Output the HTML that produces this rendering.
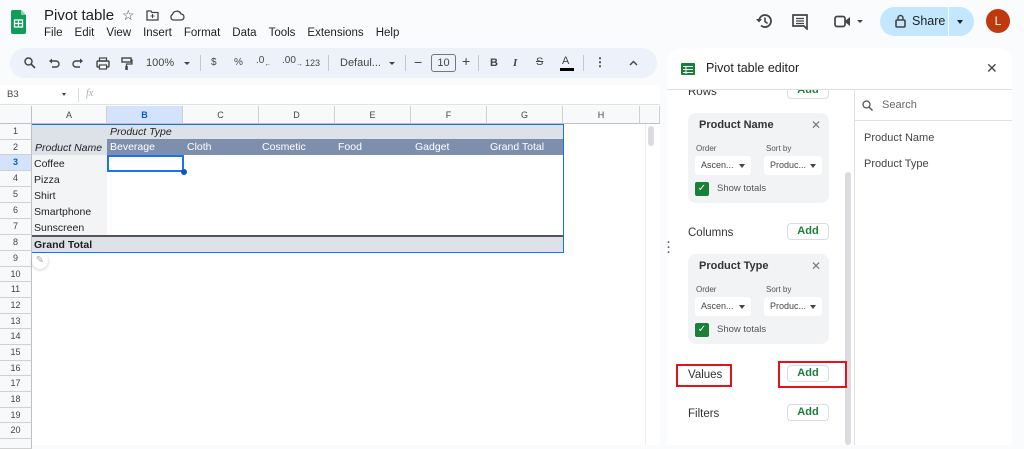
<!DOCTYPE html>
<html><head><meta charset="utf-8"><style>
*{box-sizing:border-box;margin:0;padding:0}
body{width:1024px;height:445px;overflow:hidden;background:#f9fbfd;font-family:"Liberation Sans",Arial,sans-serif;position:relative;color:#1f1f1f}
.a{position:absolute}
.menu span{margin-right:12px}
.grid{background:#fff}
.rh{position:absolute;left:0;width:32px;font-size:9px;color:#444;text-align:center;border-bottom:1px solid #d0d0d0;background:#f8f9fa;border-right:1px solid #c0c0c0}
.ch{position:absolute;top:106px;height:18px;font-size:9px;color:#444;text-align:center;line-height:18px;border-right:1px solid #d0d0d0;background:#f8f9fa;border-bottom:1px solid #c0c0c0}
.cell{position:absolute;font-size:10.5px;line-height:16px}
.btn{position:absolute;width:42px;height:17px;border:1px solid #dadce0;border-radius:4px;background:#fff;color:#188038;font-size:11px;font-weight:bold;text-align:center;line-height:15px}
.card{position:absolute;left:688px;width:141px;height:90px;background:#f1f3f4;border-radius:8px}
.sel{position:absolute;height:19px;background:#fff;border-radius:3px;font-size:9px;color:#444;line-height:19px;padding-left:6px}
.sel:after{content:"";position:absolute;right:6px;top:8px;border:3px solid transparent;border-top:4px solid #444}
.lbl{position:absolute;font-size:8px;color:#555}
.chk{position:absolute;width:14px;height:14px;background:#188038;border-radius:2px;color:#fff;font-size:10px;text-align:center;line-height:14px}
</style></head><body>
<svg class="a" style="left:11px;top:10px" width="15" height="24" viewBox="0 0 15 24"><path d="M0 2Q0 0 2 0H10L15 5V22Q15 24 13 24H2Q0 24 0 22Z" fill="#0f9d58"/><path d="M10 0V5H15Z" fill="#87ceac"/><rect x="3.5" y="10" width="8" height="7" fill="none" stroke="#fff" stroke-width="1.3"/><path d="M3.5 13.5H11.5M7.5 10V17" stroke="#fff" stroke-width="1.2"/></svg>
<div class="a" style="left:44px;top:7px;font-size:15px;color:#1f1f1f">Pivot table</div>
<div class="a" style="left:122px;top:7px;font-size:14px;color:#444">☆</div>
<svg class="a" style="left:146px;top:10px" width="13" height="11"><path d="M1 1H5L6 2.5H12V10H1Z" fill="none" stroke="#444" stroke-width="1.3"/><path d="M6.5 4V8M4.5 6H8.5" stroke="#444"/></svg>
<svg class="a" style="left:169px;top:9px" width="16" height="12"><path d="M4 11H12A3 3 0 0 0 12 5A4.5 4.5 0 0 0 3.5 5.5A3 3 0 0 0 4 11Z" fill="none" stroke="#444" stroke-width="1.3"/></svg>
<div class="a menu" style="left:44px;top:27px;font-size:11.5px;color:#1f1f1f;white-space:nowrap"><span>File</span><span>Edit</span><span>View</span><span>Insert</span><span>Format</span><span>Data</span><span>Tools</span><span>Extensions</span><span>Help</span></div>
<svg class="a" style="left:755px;top:13px" width="18" height="16" viewBox="0 0 18 16"><path d="M4 8A6 6 0 1 1 6 12.5" fill="none" stroke="#444" stroke-width="1.8"/><path d="M1 6L4 9.5L7 6Z" fill="#444"/><path d="M10 4.5V8.5L12.5 10.5" fill="none" stroke="#444" stroke-width="1.6"/></svg>
<svg class="a" style="left:792px;top:14px" width="16" height="16"><path d="M1 1H15V12H15V15L12 12H1Z" fill="none" stroke="#444" stroke-width="1.7"/><path d="M4 4.5H12M4 7H12M4 9.5H12" stroke="#444" stroke-width="1.2"/></svg>
<svg class="a" style="left:834px;top:15px" width="20" height="13"><rect x="1" y="1.5" width="10" height="10" rx="2" fill="none" stroke="#444" stroke-width="1.7"/><path d="M11 6L16 2V11L11 7Z" fill="#444"/></svg>
<div class="a" style="left:857px;top:20px;border:3px solid transparent;border-top:3.5px solid #444"></div>
<div class="a" style="left:880px;top:7px;width:94px;height:29px;border-radius:15px;background:#c2e7ff"></div>
<div class="a" style="left:948px;top:7px;width:1px;height:29px;background:#f9fbfd"></div>
<svg class="a" style="left:895px;top:14px" width="11" height="14"><rect x="1" y="6" width="9" height="7" rx="1" fill="none" stroke="#444" stroke-width="1.6"/><path d="M3 6V4A2.5 2.5 0 0 1 8 4V6" fill="none" stroke="#444" stroke-width="1.5"/></svg>
<div class="a" style="left:912px;top:14px;font-size:12.5px;color:#1f1f1f">Share</div>
<div class="a" style="left:957px;top:20px;border:3.5px solid transparent;border-top:4px solid #1f1f1f"></div>
<div class="a" style="left:986px;top:9px;width:24px;height:24px;border-radius:50%;background:#c0380d;color:#fff;font-size:12px;text-align:center;line-height:24px">L</div>
<div class="a" style="left:10px;top:48px;width:647px;height:30px;border-radius:15px;background:#edf2fa"></div>
<svg class="a" style="left:24px;top:57px" width="12" height="12"><circle cx="4.5" cy="4.5" r="3.5" fill="none" stroke="#444" stroke-width="1.5"/><path d="M7 7L11 11" stroke="#444" stroke-width="1.6"/></svg>
<svg class="a" style="left:49px;top:58px" width="11" height="11"><path d="M2 3H7A3 3 0 0 1 7 9H3" fill="none" stroke="#444" stroke-width="1.4"/><path d="M0 3L3 0.5V5.5Z" fill="#444"/></svg>
<svg class="a" style="left:72px;top:58px" width="11" height="11"><path d="M9 3H4A3 3 0 0 0 4 9H8" fill="none" stroke="#444" stroke-width="1.4"/><path d="M11 3L8 0.5V5.5Z" fill="#444"/></svg>
<svg class="a" style="left:96px;top:57px" width="14" height="13"><rect x="1" y="4" width="12" height="6" rx="1" fill="none" stroke="#444" stroke-width="1.4"/><rect x="3.5" y="1" width="7" height="3" fill="none" stroke="#444" stroke-width="1.2"/><rect x="3.5" y="8" width="7" height="4" fill="#fff" stroke="#444" stroke-width="1.2"/></svg>
<svg class="a" style="left:121px;top:57px" width="12" height="14"><rect x="1" y="1" width="9" height="4" fill="none" stroke="#444" stroke-width="1.4"/><path d="M10 3H11V7H5.5V9" fill="none" stroke="#444" stroke-width="1.2"/><rect x="4.3" y="9" width="2.5" height="4" fill="#444"/></svg>
<div class="a" style="left:146px;top:57px;font-size:11px;color:#444">100%</div>
<div class="a" style="left:184px;top:62px;border:3px solid transparent;border-top:3.5px solid #444"></div>
<div class="a" style="left:200px;top:55px;width:1px;height:16px;background:#c7c7c7"></div>
<div class="a" style="left:211px;top:57px;font-size:10px;color:#444">$</div>
<div class="a" style="left:234px;top:57px;font-size:10px;color:#444">%</div>
<div class="a" style="left:256px;top:55px;font-size:10px;color:#444">.0<sub style="font-size:7px">←</sub></div>
<div class="a" style="left:282px;top:55px;font-size:10px;color:#444">.00<sub style="font-size:7px">→</sub></div>
<div class="a" style="left:305px;top:58px;font-size:9px;color:#444">123</div>
<div class="a" style="left:328px;top:55px;width:1px;height:16px;background:#c7c7c7"></div>
<div class="a" style="left:340px;top:57px;font-size:11px;color:#444">Defaul...</div>
<div class="a" style="left:389px;top:62px;border:3px solid transparent;border-top:3.5px solid #444"></div>
<div class="a" style="left:405px;top:55px;width:1px;height:16px;background:#c7c7c7"></div>
<div class="a" style="left:414px;top:54px;font-size:14px;color:#444">−</div>
<div class="a" style="left:431px;top:54px;width:25px;height:18px;border:1px solid #747775;border-radius:3px;font-size:11px;text-align:center;line-height:16px;color:#444">10</div>
<div class="a" style="left:462px;top:53px;font-size:14px;color:#444">+</div>
<div class="a" style="left:478px;top:55px;width:1px;height:16px;background:#c7c7c7"></div>
<div class="a" style="left:490px;top:57px;font-size:11px;font-weight:bold;color:#444">B</div>
<div class="a" style="left:513px;top:57px;font-size:11px;font-style:italic;font-family:'Liberation Serif',serif;font-weight:bold;color:#444">I</div>
<div class="a" style="left:536px;top:56px;font-size:11px;color:#444;text-decoration:line-through">S</div>
<div class="a" style="left:562px;top:55px;font-size:11px;color:#444">A</div>
<div class="a" style="left:560px;top:68px;width:14px;height:3px;background:#000"></div>
<div class="a" style="left:583px;top:55px;width:1px;height:16px;background:#c7c7c7"></div>
<div class="a" style="left:594px;top:55px;font-size:12px;color:#444;font-weight:bold">⋮</div>
<svg class="a" style="left:629px;top:60px" width="9" height="6"><path d="M1 5L4.5 1.5L8 5" fill="none" stroke="#444" stroke-width="1.4"/></svg>
<div class="a" style="left:0;top:85px;width:660px;height:20px;background:#fff;border-bottom:1px solid #e1e3e1"></div>
<div class="a" style="left:7px;top:89px;font-size:9.5px;color:#444">B3</div>
<div class="a" style="left:62px;top:93px;border:2.5px solid transparent;border-top:3px solid #444"></div>
<div class="a" style="left:78px;top:88px;width:1px;height:14px;background:#ddd"></div>
<div class="a" style="left:86px;top:88px;font-size:10px;color:#aaa;font-style:italic;font-family:'Liberation Serif',serif">fx</div>
<div class="a grid" style="left:0;top:106px;width:660px;height:339px"></div>
<div class="a" style="left:0;top:106px;width:32px;height:18px;background:#f8f9fa;border-right:1px solid #c0c0c0;border-bottom:1px solid #c0c0c0"></div>
<div class="ch" style="left:32px;width:75px">A</div>
<div class="ch" style="left:107px;width:76px;background:#d3e3fd;color:#0b57d0;font-weight:bold">B</div>
<div class="ch" style="left:183px;width:76px">C</div>
<div class="ch" style="left:259px;width:76px">D</div>
<div class="ch" style="left:335px;width:76px">E</div>
<div class="ch" style="left:411px;width:76px">F</div>
<div class="ch" style="left:487px;width:76px">G</div>
<div class="ch" style="left:563px;width:77px">H</div>
<div class="ch" style="left:640px;width:20px"></div>
<div class="a" style="left:0;top:124px;width:32px;height:321px">
<div class="rh" style="top:0;height:16px;line-height:15px">1</div>
<div class="rh" style="top:16px;height:15px;line-height:15px">2</div>
<div class="rh" style="top:31px;height:16px;line-height:15px;background:#d3e3fd;color:#0b57d0;font-weight:bold">3</div>
<div class="rh" style="top:47px;height:16px;line-height:15px">4</div>
<div class="rh" style="top:63px;height:16px;line-height:15px">5</div>
<div class="rh" style="top:79px;height:16px;line-height:15px">6</div>
<div class="rh" style="top:95px;height:16px;line-height:15px">7</div>
<div class="rh" style="top:111px;height:16px;line-height:15px">8</div>
<div class="rh" style="top:127px;height:16px;line-height:15px">9</div>
<div class="rh" style="top:143px;height:15px;line-height:15px">10</div>
<div class="rh" style="top:158px;height:16px;line-height:15px">11</div>
<div class="rh" style="top:174px;height:16px;line-height:15px">12</div>
<div class="rh" style="top:190px;height:15px;line-height:15px">13</div>
<div class="rh" style="top:205px;height:16px;line-height:15px">14</div>
<div class="rh" style="top:221px;height:16px;line-height:15px">15</div>
<div class="rh" style="top:237px;height:15px;line-height:15px">16</div>
<div class="rh" style="top:252px;height:16px;line-height:15px">17</div>
<div class="rh" style="top:268px;height:16px;line-height:15px">18</div>
<div class="rh" style="top:284px;height:15px;line-height:15px">19</div>
<div class="rh" style="top:299px;height:16px;line-height:15px">20</div>
<div class="rh" style="top:315px;height:10px"></div>
</div>
<div class="a" style="left:32px;top:124px;width:532px;height:15px;background:#dde1e8"></div>
<div class="a" style="left:32px;top:139px;width:75px;height:16px;background:#dde1e8"></div>
<div class="a" style="left:107px;top:139px;width:457px;height:16px;background:#7e8fae"></div>
<div class="a" style="left:32px;top:155px;width:75px;height:80px;background:#f3f4f6"></div>
<div class="a" style="left:32px;top:235px;width:532px;height:2px;background:#555"></div>
<div class="a" style="left:32px;top:237px;width:532px;height:16px;background:#dde1e8"></div>
<div class="a" style="left:32px;top:124px;width:532px;height:129px;border:1.5px solid #1a73e8;border-left:none"></div>
<div class="cell" style="left:110px;top:124px;font-style:italic;color:#222">Product Type</div>
<div class="cell" style="left:35px;top:140px;font-style:italic;color:#222">Product Name</div>
<div class="cell" style="left:110px;top:139px;color:#fff">Beverage</div>
<div class="cell" style="left:187px;top:139px;color:#fff">Cloth</div>
<div class="cell" style="left:262px;top:139px;color:#fff">Cosmetic</div>
<div class="cell" style="left:338px;top:139px;color:#fff">Food</div>
<div class="cell" style="left:415px;top:139px;color:#fff">Gadget</div>
<div class="cell" style="left:490px;top:139px;color:#fff">Grand Total</div>
<div class="cell" style="left:34px;top:156px">Coffee</div>
<div class="cell" style="left:34px;top:172px">Pizza</div>
<div class="cell" style="left:34px;top:188px">Shirt</div>
<div class="cell" style="left:34px;top:204px">Smartphone</div>
<div class="cell" style="left:34px;top:220px">Sunscreen</div>
<div class="cell" style="left:34px;top:237px;font-weight:bold">Grand Total</div>
<div class="a" style="left:107px;top:155px;width:77px;height:17px;border:2px solid #1a73e8"></div>
<div class="a" style="left:181px;top:169px;width:6px;height:6px;border-radius:50%;background:#0b57d0"></div>
<div class="a" style="left:32px;top:253px;width:16px;height:16px;background:#fff;border-radius:50%;box-shadow:0 1px 3px rgba(0,0,0,.2);font-size:10px;color:#aaa;text-align:center;line-height:16px">✎</div>
<div class="a" style="left:645px;top:124px;width:15px;height:321px;background:#fff;border-left:1px solid #eee"></div>
<div class="a" style="left:648px;top:126px;width:6px;height:20px;border-radius:3px;background:#dadce0"></div>
<div class="a" style="left:667px;top:48px;width:345px;height:397px;background:#fff;border-radius:14px 14px 0 0"></div>
<svg class="a" style="left:681px;top:63px" width="14" height="12"><rect x="0" y="0" width="14" height="12" rx="1" fill="#188038"/><path d="M2 3.5H12M2 6.5H12M2 9.5H12M5 3V11" stroke="#fff" stroke-width="1"/></svg>
<div class="a" style="left:706px;top:61px;font-size:12.5px;color:#1f1f1f">Pivot table editor</div>
<div class="a" style="left:986px;top:60px;font-size:14px;color:#444">✕</div>
<div class="a" style="left:667px;top:89px;width:345px;height:1px;background:#e0e0e0"></div>
<div class="a" style="left:854px;top:90px;width:1px;height:355px;background:#e0e0e0"></div>
<div class="a" style="left:854px;top:120px;width:158px;height:1px;background:#e0e0e0"></div>
<div class="a" style="left:845px;top:172px;width:6px;height:273px;background:#dadce0;border-radius:3px"></div>
<div class="a" style="left:668px;top:90px;width:176px;height:10px;overflow:hidden">
<div class="a" style="left:20px;top:-4px;font-size:11.5px;color:#333">Rows</div>
<div class="btn" style="left:119px;top:-8px">Add</div></div>
<div class="card" style="top:113px"></div>
<div class="a" style="left:699px;top:119px;font-size:11px;font-weight:bold;color:#333">Product Name</div>
<div class="a" style="left:811px;top:118px;font-size:12px;color:#777">✕</div>
<div class="lbl" style="left:696px;top:144px">Order</div>
<div class="lbl" style="left:766px;top:144px">Sort by</div>
<div class="sel" style="left:695px;top:156px;width:56px">Ascen...</div>
<div class="sel" style="left:764px;top:156px;width:58px">Produc...</div>
<div class="chk" style="left:695px;top:182px">✓</div>
<div class="a" style="left:717px;top:183px;font-size:9.5px;color:#555">Show totals</div>
<div class="a" style="left:688px;top:227px;font-size:11.5px;color:#333">Columns</div>
<div class="btn" style="left:787px;top:223px">Add</div>
<div class="a" style="left:667px;top:241px;font-size:11px;color:#555;line-height:5px;font-weight:bold">·<br>·<br>·</div>
<div class="card" style="top:254px"></div>
<div class="a" style="left:699px;top:260px;font-size:11px;font-weight:bold;color:#333">Product Type</div>
<div class="a" style="left:811px;top:259px;font-size:12px;color:#777">✕</div>
<div class="lbl" style="left:696px;top:285px">Order</div>
<div class="lbl" style="left:766px;top:285px">Sort by</div>
<div class="sel" style="left:695px;top:297px;width:56px">Ascen...</div>
<div class="sel" style="left:764px;top:297px;width:58px">Produc...</div>
<div class="chk" style="left:695px;top:323px">✓</div>
<div class="a" style="left:717px;top:324px;font-size:9.5px;color:#555">Show totals</div>
<div class="a" style="left:676px;top:364px;width:56px;height:23px;border:2px solid #e8101a"></div>
<div class="a" style="left:688px;top:369px;font-size:11.5px;color:#333">Values</div>
<div class="a" style="left:778px;top:361px;width:69px;height:27px;border:2px solid #e8101a"></div>
<div class="btn" style="left:787px;top:365px">Add</div>
<div class="a" style="left:688px;top:408px;font-size:11.5px;color:#333">Filters</div>
<div class="btn" style="left:787px;top:404px">Add</div>
<svg class="a" style="left:862px;top:100px" width="11" height="11"><circle cx="4.5" cy="4.5" r="3.5" fill="none" stroke="#555" stroke-width="1.3"/><path d="M7 7L10.5 10.5" stroke="#555" stroke-width="1.4"/></svg>
<div class="a" style="left:882px;top:99px;font-size:11px;color:#666">Search</div>
<div class="a" style="left:864px;top:132px;font-size:11px;color:#444">Product Name</div>
<div class="a" style="left:864px;top:158px;font-size:11px;color:#444">Product Type</div>
</body></html>
